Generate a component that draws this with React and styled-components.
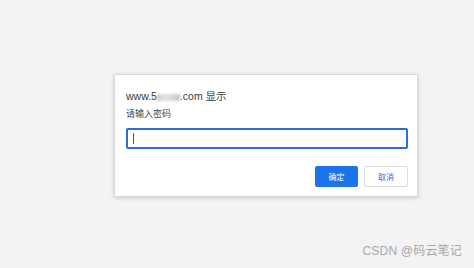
import React from "react";
import styled, { createGlobalStyle } from "styled-components";

const Global = createGlobalStyle`
  html, body { margin: 0; padding: 0; }
  body { background: #f3f3f3; font-family: "Liberation Sans", Arial, "Noto Sans CJK SC", sans-serif; }
`;

const Page = styled.div`
  position: relative;
  width: 474px;
  height: 268px;
  overflow: hidden;
  background: #f3f3f3;
  padding-top: 74px;
  padding-left: 114px;
  box-sizing: border-box;
`;

const Dialog = styled.div`
  width: 304px;
  height: 123px;
  box-sizing: border-box;
  background: #ffffff;
  border: 1px solid #d9d9d9;
  box-shadow: 0 1px 4px rgba(0, 0, 0, 0.18);
  padding: 14px 10px 0 11px;
  display: flex;
  flex-direction: column;
`;

const Title = styled.div`
  font-size: 10.5px;
  color: #3a3a3a;
  line-height: 14px;
  display: flex;
  align-items: center;
`;

const Blur = styled.span`
  display: inline-block;
  width: 23px;
  height: 7px;
  margin-top: 3px;
  background: linear-gradient(90deg, #c9c9c9, #e2e2e2 30%, #d8d8d8 70%, #c4c4c4);
  filter: blur(1.2px);
`;

const Label = styled.div`
  margin-top: 5px;
  font-size: 9px;
  color: #444;
  line-height: 12px;
`;

const Input = styled.div`
  margin-top: 8px;
  width: 282px;
  height: 21px;
  box-sizing: border-box;
  border: 2px solid #2a6fd3;
  border-radius: 2px;
  display: flex;
  align-items: center;
  padding-left: 5px;
`;

const Caret = styled.span`
  width: 1px;
  height: 11px;
  background: #555;
`;

const Actions = styled.div`
  margin-top: 17px;
  display: flex;
  justify-content: flex-end;
  gap: 6px;
  width: 282px;
`;

const Button = styled.div`
  width: ${(p) => (p.$primary ? "43px" : "44px")};
  height: 21px;
  box-sizing: border-box;
  border-radius: 2px;
  display: flex;
  align-items: center;
  justify-content: center;
  font-size: 8px;
  background: ${(p) => (p.$primary ? "#1a73e8" : "#fff")};
  color: ${(p) => (p.$primary ? "#fff" : "#1a73e8")};
  border: ${(p) => (p.$primary ? "none" : "1px solid #dadce0")};
`;

const Watermark = styled.div`
  position: absolute;
  right: 12px;
  bottom: 10px;
  font-size: 12px;
  color: #a8a8a8;
  letter-spacing: 0.2px;
`;

export default function App() {
  return (
    <>
      <Global />
      <Page>
        <Dialog>
          <Title>
            www.5<Blur />.com&nbsp;显示
          </Title>
          <Label>请输入密码</Label>
          <Input>
            <Caret />
          </Input>
          <Actions>
            <Button $primary>确定</Button>
            <Button>取消</Button>
          </Actions>
        </Dialog>
        <Watermark>CSDN @码云笔记</Watermark>
      </Page>
    </>
  );
}
